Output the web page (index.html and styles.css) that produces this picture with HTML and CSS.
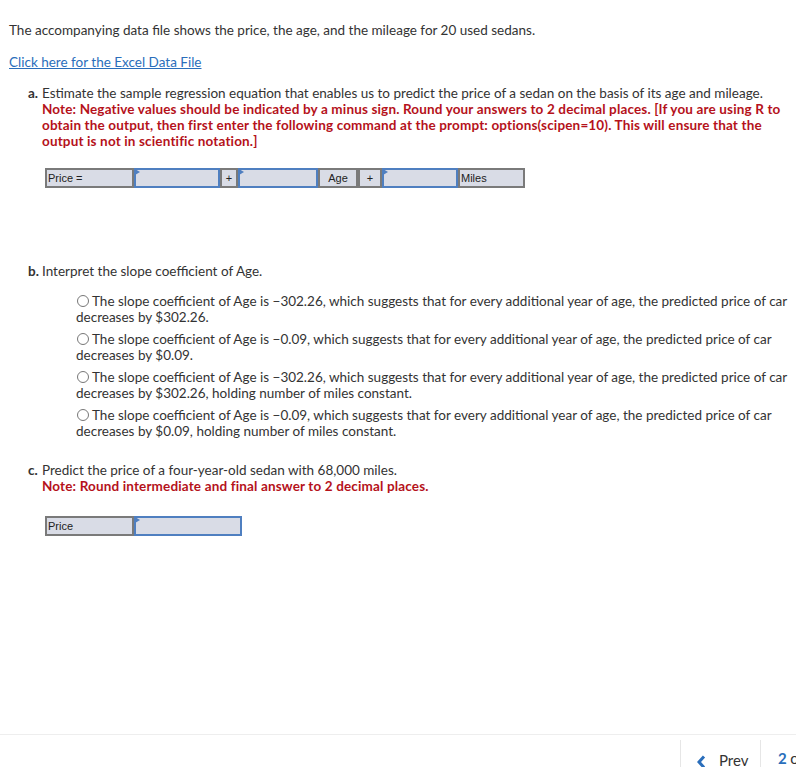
FILE: index.html
```html
<html>
<head>
    <title>Question - Used sedans</title>
    <link rel="stylesheet" href="styles.css">
</head>
<body>

<div id="question">

    <p class="intro">The accompanying data file shows the price, the age, and the mileage for 20 used sedans.</p>
    <p class="intro"><a href="#" class="datalink">Click here for the Excel Data File</a></p>

    <div class="part">
        <span class="partlabel">a.</span>
        <div class="partbody">
            Estimate the sample regression equation that enables us to predict the price of a sedan on the basis of its age and mileage.
            <br>
            <span class="note">Note: Negative values should be indicated by a minus sign. Round your answers to 2 decimal places. [If you are using R to obtain the output, then first enter the following command at the prompt: options(scipen=10). This will ensure that the output is not in scientific notation.]</span>
        </div>
    </div>

    <div class="answerrow">
        <span class="cell label wide">Price =</span><span class="cell input w86"></span><span class="cell label plus">+</span><span class="cell input w80"></span><span class="cell label age">Age</span><span class="cell label plus2">+</span><span class="cell input w76"></span><span class="cell label miles">Miles</span>
    </div>

    <div class="part partb">
        <span class="partlabel">b.</span>
        <div class="partbody">Interpret the slope coefficient of Age.</div>
    </div>

    <ul class="choices">
        <li><span class="radio"></span>The slope coefficient of Age is &minus;302.26, which suggests that for every additional year of age, the predicted price of car decreases by $302.26.</li>
        <li><span class="radio"></span>The slope coefficient of Age is &minus;0.09, which suggests that for every additional year of age, the predicted price of car decreases by $0.09.</li>
        <li><span class="radio"></span>The slope coefficient of Age is &minus;302.26, which suggests that for every additional year of age, the predicted price of car decreases by $302.26, holding number of miles constant.</li>
        <li><span class="radio"></span>The slope coefficient of Age is &minus;0.09, which suggests that for every additional year of age, the predicted price of car decreases by $0.09, holding number of miles constant.</li>
    </ul>

    <div class="part partc">
        <span class="partlabel">c.</span>
        <div class="partbody">
            Predict the price of a four-year-old sedan with 68,000 miles.
            <br>
            <span class="note">Note: Round intermediate and final answer to 2 decimal places.</span>
        </div>
    </div>

    <div class="answerrow rowc">
        <span class="cell label wide">Price</span><span class="cell input w108"></span>
    </div>

</div>

<div id="footer">
    <div class="pager">
        <span class="prev">
            <svg class="chev" width="9" height="14" viewBox="0 0 9 14"><path d="M7 1.5 L2 7 L7 12.5" fill="none" stroke="#2a6ebb" stroke-width="3" stroke-linejoin="miter"/></svg>
            <span class="prevtext">Prev</span>
        </span>
        <span class="pagenum">2 <span class="of">of 12</span></span>
    </div>
</div>

</body>
</html>
```

FILE: styles.css
```css
body {
    margin: 0;
    background: #ffffff;
    font-family: Lato, "Open Sans", sans-serif;
    font-size: 13.5px;
    color: #333333;
    width: 796px;
    height: 767px;
    overflow: hidden;
}

p {
    margin: 0;
}

#question {
    padding: 21px 0 0 9px;
    height: 713px;
}

.intro {
    line-height: 18px;
    margin-bottom: 14px;
}

.datalink {
    color: #2a6ebb;
    text-decoration: underline;
}

.part {
    display: flex;
    padding-left: 19px;
    line-height: 16px;
    margin-top: 10px;
}

.partlabel {
    width: 14px;
    font-weight: bold;
    color: #333333;
}

.partbody {
    flex: 1;
    padding-right: 8px;
}

.note {
    color: #b5121b;
    font-weight: bold;
    letter-spacing: 0.15px;
}

.answerrow {
    display: flex;
    margin: 19px 0 0 36px;
    height: 20px;
}

.cell {
    box-sizing: border-box;
    height: 20px;
    background: #d9dce6;
    font-family: "Liberation Sans", Arial, sans-serif;
    font-size: 11px;
    line-height: 16px;
    color: #222222;
}

.label {
    border: 2px solid #7a7a7a;
    padding-left: 1px;
}

.input {
    border: 2px solid #4f7fc0;
    position: relative;
}

.input::before {
    content: "";
    position: absolute;
    left: -1px;
    top: -1px;
    border-left: 5px solid #4f7fc0;
    border-top: 3px solid transparent;
    border-bottom: 3px solid transparent;
}

.wide { width: 89px; }
.plus { width: 18px; text-align: center; padding: 0; }
.plus2 { width: 24px; text-align: center; padding: 0; }
.age { width: 40px; text-align: center; padding: 0; }
.miles { width: 67px; }
.w86 { width: 86px; }
.w80 { width: 80px; }
.w76 { width: 76px; }
.w108 { width: 108px; }

.partb {
    margin-top: 75px;
}

.choices {
    list-style: none;
    margin: 14px 0 0 0;
    padding: 0 4px 0 67px;
}

.choices li {
    line-height: 16px;
    margin-bottom: 6px;
}

.radio {
    display: inline-block;
    box-sizing: border-box;
    width: 12px;
    height: 12px;
    border: 1px solid #777777;
    border-radius: 50%;
    margin: 0 3px -1px 1px;
}

.partc {
    margin-top: 23px;
}

.rowc {
    margin-top: 22px;
}

#footer {
    border-top: 1px solid #eeeeee;
    height: 53px;
    display: flex;
    justify-content: flex-end;
}

.pager {
    display: flex;
    width: 116px;
    margin-top: 5px;
    height: 48px;
    overflow: hidden;
}

.prev {
    display: flex;
    align-items: center;
    flex: none;
    border-left: 1px solid #e6e6e6;
    border-right: 1px solid #e6e6e6;
    width: 81px;
    height: 48px;
    padding: 0 0 14px 16px;
    box-sizing: border-box;
    font-size: 15px;
    line-height: 18px;
}

.chev {
    margin: 10px 13px 0 0;
}

.prevtext {
    border-bottom: 1px dotted #333333;
    line-height: 16px;
    margin-top: 7px;
}

.pagenum {
    flex: none;
    padding: 9px 0 0 17px;
    font-weight: bold;
    color: #2a6ebb;
    font-size: 15px;
    line-height: 18px;
    white-space: nowrap;
}

.of {
    color: #333333;
    font-weight: normal;
}
```
